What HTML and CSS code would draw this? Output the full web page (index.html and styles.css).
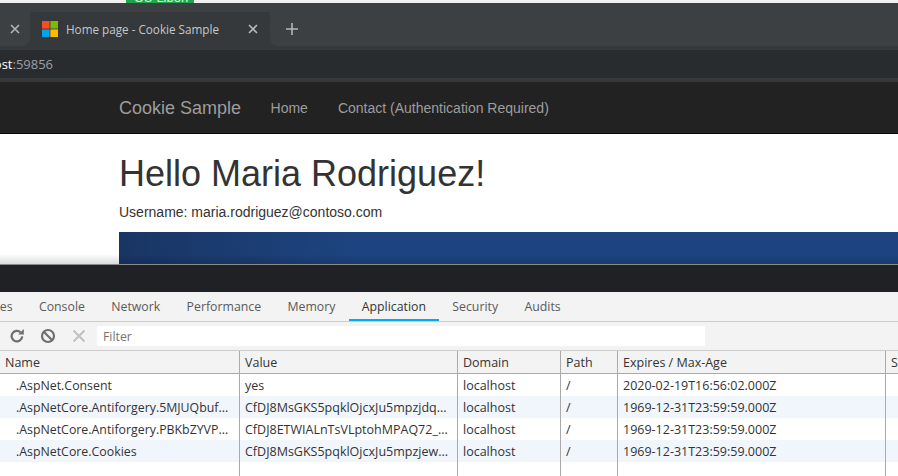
FILE: index.html
```html
<!DOCTYPE html>
<html lang="en">
<head>
<meta charset="utf-8">
<title>Home page - Cookie Sample</title>
<link rel="stylesheet" href="styles.css">
</head>
<body>
<div class="app">
  <div class="os-top"><div class="os-badge"><span class="os-badge-text">CU Libon</span></div></div>
  <div class="tabstrip">
    <div class="tab-prev">
      <svg class="close" viewBox="0 0 10 10"><path d="M1 1l8 8M9 1l-8 8"/></svg>
    </div>
    <div class="tab-active">
      <svg class="ms-logo" viewBox="0 0 16 16">
        <rect width="7.6" height="7.6" fill="#f25022"/>
        <rect x="8.4" width="7.6" height="7.6" fill="#7fba00"/>
        <rect y="8.4" width="7.6" height="7.6" fill="#00a4ef"/>
        <rect x="8.4" y="8.4" width="7.6" height="7.6" fill="#ffb900"/>
      </svg>
      <span class="tab-title">Home page - Cookie Sample</span>
      <svg class="close" viewBox="0 0 10 10"><path d="M1 1l8 8M9 1l-8 8"/></svg>
    </div>
    <div class="tab-rest">
      <svg class="plus" viewBox="0 0 12 12"><path d="M6 0v12M0 6h12"/></svg>
    </div>
  </div>
  <div class="address-band">
    <div class="address"><span class="host">localhost</span><span class="port">:59856</span></div>
  </div>
  <nav class="navbar">
    <a class="brand">Cookie Sample</a>
    <a class="nav-link">Home</a>
    <a class="nav-link">Contact (Authentication Required)</a>
  </nav>
  <main class="page">
    <h1 class="hello">Hello Maria Rodriguez!</h1>
    <p class="username">Username: maria.rodriguez@contoso.com</p>
    <div class="banner"></div>
  </main>
  <section class="devtools">
    <div class="dt-dark"></div>
    <div class="dt-tabs">
      <span class="dt-tab cut">Sources</span>
      <span class="dt-tab">Console</span>
      <span class="dt-tab">Network</span>
      <span class="dt-tab">Performance</span>
      <span class="dt-tab">Memory</span>
      <span class="dt-tab selected">Application</span>
      <span class="dt-tab">Security</span>
      <span class="dt-tab">Audits</span>
    </div>
    <div class="dt-toolbar">
      <svg class="tool" viewBox="0 0 16 16"><path class="reload" d="M13.2 8.4a5.3 5.3 0 1 1-1.7-4.2"/><path class="fill-icon" d="M9.2 6.6h5.6V1z"/></svg>
      <svg class="tool" viewBox="0 0 16 16"><circle class="block" cx="8" cy="8" r="6"/><path class="block" d="M3.8 3.8l8.4 8.4"/></svg>
      <svg class="tool x" viewBox="0 0 16 16"><path class="clear" d="M2.5 2.5l11 11M13.500 2.500l-11 11"/></svg>
      <div class="filter">Filter</div>
    </div>
    <div class="table">
      <div class="row head">
        <div class="cell c-name">Name</div><div class="cell c-value">Value</div><div class="cell c-domain">Domain</div><div class="cell c-path">Path</div><div class="cell c-exp">Expires / Max-Age</div><div class="cell c-size">Size</div>
      </div>
      <div class="row">
        <div class="cell c-name ind">.AspNet.Consent</div><div class="cell c-value">yes</div><div class="cell c-domain">localhost</div><div class="cell c-path">/</div><div class="cell c-exp">2020-02-19T16:56:02.000Z</div><div class="cell c-size"></div>
      </div>
      <div class="row alt">
        <div class="cell c-name ind">.AspNetCore.Antiforgery.5MJUQbuf...</div><div class="cell c-value">CfDJ8MsGKS5pqklOjcxJu5mpzjdq...</div><div class="cell c-domain">localhost</div><div class="cell c-path">/</div><div class="cell c-exp">1969-12-31T23:59:59.000Z</div><div class="cell c-size"></div>
      </div>
      <div class="row">
        <div class="cell c-name ind">.AspNetCore.Antiforgery.PBKbZYVP...</div><div class="cell c-value">CfDJ8ETWIALnTsVLptohMPAQ72_...</div><div class="cell c-domain">localhost</div><div class="cell c-path">/</div><div class="cell c-exp">1969-12-31T23:59:59.000Z</div><div class="cell c-size"></div>
      </div>
      <div class="row alt">
        <div class="cell c-name ind">.AspNetCore.Cookies</div><div class="cell c-value">CfDJ8MsGKS5pqklOjcxJu5mpzjew...</div><div class="cell c-domain">localhost</div><div class="cell c-path">/</div><div class="cell c-exp">1969-12-31T23:59:59.000Z</div><div class="cell c-size"></div>
      </div>
      <div class="row filler">
        <div class="cell c-name"></div><div class="cell c-value"></div><div class="cell c-domain"></div><div class="cell c-path"></div><div class="cell c-exp"></div><div class="cell c-size"></div>
      </div>
    </div>
  </section>
</div>
</body>
</html>
```
FILE: styles.css
```css
* { box-sizing: border-box; }
html, body { margin: 0; padding: 0; height: 100%; overflow: hidden; background: #fff; }
.app { width: 898px; height: 476px; display: flex; flex-direction: column; overflow: hidden; font-family: "Liberation Sans", Arial, sans-serif; }

.os-top { height: 3px; background: #f0f0f0; padding-left: 126px; overflow: hidden; flex: none; }
.os-badge { width: 68px; height: 3px; background: #21a54a; overflow: hidden; padding-left: 8px; }
.os-badge-text { display: block; margin-top: -9px; color: #dff2e5; font-size: 13px; line-height: 13px; white-space: nowrap; }

.tabstrip { height: 43px; background: linear-gradient(#3c4043 9px, #35393c 9px); display: flex; align-items: flex-end; flex: none; }
.tab-prev { width: 30px; height: 43px; background: #3c4043; border-bottom-right-radius: 8px; display: flex; align-items: center; padding: 9px 0 0 10px; flex: none; }
.tab-active { width: 240px; height: 34px; background: #35393c; border-radius: 8px 8px 0 0; display: flex; align-items: center; padding: 0 12px; flex: none; }
.ms-logo { width: 16px; height: 16px; flex: none; }
.tab-title { margin-left: 8px; flex: 1; font-family: "Open Sans", sans-serif; font-size: 11.7px; color: #c4c7ca; white-space: nowrap; }
.close { width: 10px; height: 10px; flex: none; }
.close path { stroke: #b4b7ba; stroke-width: 1.6; fill: none; }
.tab-rest { flex: 1; height: 43px; background: #3c4043; border-bottom-left-radius: 8px; display: flex; align-items: center; padding: 9px 0 0 16px; }
.plus { width: 12px; height: 12px; flex: none; }
.plus path { stroke: #b4b7ba; stroke-width: 1.6; fill: none; }

.address-band { height: 36px; flex: none; background: #292c2f; border-top: 4px solid #35393c; border-bottom: 4px solid #35393c; display: flex; align-items: center; overflow: hidden; }
.address { margin-left: -42px; font-family: "Open Sans", sans-serif; font-size: 13px; white-space: nowrap; }
.host { color: #fff; }
.port { color: #9aa0a6; }

.navbar { height: 52px; flex: none; background: #222; border-bottom: 1px solid #080808; display: flex; align-items: center; padding-left: 119px; }
.brand { font-size: 18px; color: #9d9d9d; margin-right: 29.500px; padding-top: 2px; }
.nav-link { font-size: 14px; color: #9d9d9d; margin-right: 30px; }

.page { height: 130px; flex: none; padding-left: 119px; position: relative; overflow: hidden; background: #fff; }
.page::after { content: ""; position: absolute; left: 0; right: 0; bottom: 0; height: 10px; background: linear-gradient(rgba(0,0,0,0), rgba(0,0,0,.14)); }
.hello { margin: 20px 0 0; font-size: 36px; font-weight: 400; line-height: 40px; color: #333; }
.username { margin: 8px 0 0; font-size: 14px; line-height: 20px; color: #333; }
.banner { margin-top: 10px; height: 40px; background: linear-gradient(90deg, #193563 0, #1d4480 30%, #1d4480 100%); }

.devtools { flex: 1; display: flex; flex-direction: column; font-family: "Open Sans", sans-serif; font-size: 12px; color: #333; background: #fff; border-top: 1px solid #8a8a8a; min-height: 0; }
.dt-dark { height: 27px; background: #202124; flex: none; }
.dt-tabs { height: 30px; flex: none; background: #f3f3f3; border-bottom: 1px solid #ccc; display: flex; align-items: stretch; font-size: 12.3px; }
.dt-tab { padding: 0 13.200px; line-height: 30px; color: #5a5a5a; white-space: nowrap; }
.dt-tab.cut { margin-left: -46px; }
.dt-tab.selected { color: #333; border-bottom: 2px solid #03a9f4; }
.dt-toolbar { height: 29px; flex: none; background: #f3f3f3; display: flex; align-items: center; padding-left: 9px; border-bottom: 1px solid #ccc; }
.tool { width: 16px; height: 16px; margin-right: 15px; flex: none; }
.tool.x { margin-right: 10px; }
.reload { fill: none; stroke: #6e6e6e; stroke-width: 2.2; }
.fill-icon { fill: #6e6e6e; }
.block { fill: none; stroke: #6e6e6e; stroke-width: 2.2; }
.clear { fill: none; stroke: #c0c0c0; stroke-width: 2; }
.filter { width: 608px; height: 20px; background: #fff; line-height: 22px; padding-left: 6px; color: #757575; font-size: 12.3px; }

.table { flex: 1; display: flex; flex-direction: column; min-height: 0; font-size: 12.5px; }
.row { height: 22px; display: flex; flex: none; }
.row.head { height: 23px; background: #f3f3f3; border-bottom: 1px solid #aaa; }
.row.alt { background: #f1f6fd; }
.row.filler { flex: 1; }
.cell { padding-left: 5px; line-height: 23px; border-right: 1px solid #aaa; white-space: nowrap; overflow: hidden; color: #333; flex: none; }
.cell.ind { padding-left: 16px; font-size: 12.35px; }
.c-name { width: 240px; }
.c-value { width: 218px; }
.c-domain { width: 103px; }
.c-path { width: 57px; }
.c-exp { width: 268px; }
.c-size { width: 40px; border-right: 0; }
```
